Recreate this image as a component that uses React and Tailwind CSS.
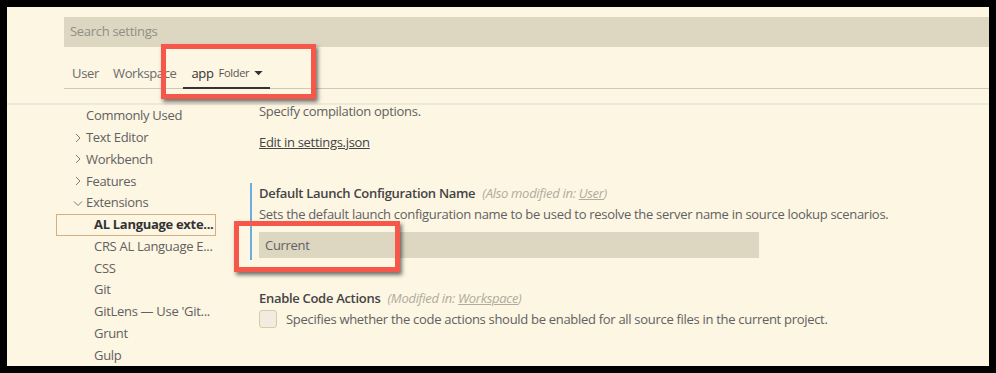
import React from "react";

const font = { fontFamily: '"Segoe UI", "Open Sans", "Noto Sans", sans-serif' };

function Chevron({ down }) {
  return (
    <svg width="16" height="16" viewBox="0 0 16 16" className="shrink-0">
      {down ? (
        <polyline points="4,6.5 8,10.5 12,6.5" fill="none" stroke="#7a7a7a" strokeWidth="1" />
      ) : (
        <polyline points="6,4 10,8 6,12" fill="none" stroke="#7a7a7a" strokeWidth="1" />
      )}
    </svg>
  );
}

function TreeItem({ label, chevron, level = 0, selected }) {
  return (
    <div
      className={
        "h-[22px] flex items-center text-[13px] leading-none whitespace-nowrap " +
        (selected ? "border border-[#d3af86] font-bold text-[#333]" : "border border-transparent text-[#616161]")
      }
      style={{ paddingLeft: level === 0 ? 13 : 37 }}
    >
      {level === 0 && (
        <span className="w-[16px] flex items-center">{chevron ? <Chevron down={chevron === "down"} /> : null}</span>
      )}
      <span>{label}</span>
    </div>
  );
}

export default function App() {
  return (
    <div className="w-[996px] h-[373px] bg-black p-[7px] tracking-[-0.3px]" style={font}>
      <div className="relative h-full bg-[#fdf6e3] overflow-hidden flex flex-col">
        {/* search */}
        <div className="ml-[57px] mt-[10px] h-[30px] bg-[#ddd6c1] flex items-center pl-[6px] text-[13px] text-[#8f8f85]">
          Search settings
        </div>
        {/* tabs */}
        <div className="ml-[57px] h-[42px] flex items-end border-b border-[#cfcab8]">
          <div className="pl-2 pr-[7px] h-full flex items-center pt-[12px] text-[13px] text-[#6a6a6a]">User</div>
          <div className="px-[7px] h-full flex items-center pt-[12px] text-[13px] text-[#6a6a6a] tracking-[-0.4px]">Workspace</div>
          <div className="pl-2 pr-[7px] h-full flex items-center pt-[12px] border-b-2 border-[#333] mb-[-1px] text-[#333]">
            <span className="text-[13px]">app</span>
            <span className="text-[11px] ml-[5px] text-[#555]">Folder</span>
            <svg width="9" height="5" viewBox="0 0 10 6" className="ml-[5px]">
              <polygon points="0,0 10,0 5,5" fill="#333" />
            </svg>
          </div>
        </div>
        {/* body */}
        <div className="mt-[14px] flex-1 flex border-t-2 border-[#efe9d8] min-h-0">
          <div className="ml-[49px] w-[160px] flex flex-col">
            <TreeItem label="Commonly Used" />
            <TreeItem label="Text Editor" chevron="right" />
            <TreeItem label="Workbench" chevron="right" />
            <TreeItem label="Features" chevron="right" />
            <TreeItem label="Extensions" chevron="down" />
            <TreeItem label="AL Language exte..." level={1} selected />
            <TreeItem label="CRS AL Language E..." level={1} />
            <TreeItem label="CSS" level={1} />
            <TreeItem label="Git" level={1} />
            <TreeItem label="GitLens — Use 'Git..." level={1} />
            <TreeItem label="Grunt" level={1} />
            <TreeItem label="Gulp" level={1} />
          </div>
          <div className="ml-[34px] flex-1 flex flex-col text-[13px] text-[#616161]">
            <div className="pl-[9px] mt-[-3px] leading-[18px]">Specify compilation options.</div>
            <div className="pl-[9px] mt-[13px] leading-[18px] text-[#444] underline">Edit in settings.json</div>
            <div className="mt-[32px] border-l-2 border-[#6aaee0] pl-[7px] pt-[1px] pb-[2px] w-[509px]">
              <div className="leading-[18px] flex items-baseline">
                <span className="font-semibold text-[#444]">Default Launch Configuration Name</span>
                <span className="italic text-[#b0ab9c] ml-[7px]">
                  (Also modified in: <span className="underline">User</span>)
                </span>
              </div>
              <div className="leading-[18px] mt-[3px] whitespace-nowrap">
                Sets the default launch configuration name to be used to resolve the server name in source lookup scenarios.
              </div>
              <div className="mt-[9px] h-[26px] w-[500px] bg-[#ddd6c1] flex items-center pl-[6px] pt-[2px] text-[#616161]">
                Current
              </div>
            </div>
            <div className="pl-[9px] mt-[29px] leading-[18px] flex items-baseline">
              <span className="font-semibold text-[#444]">Enable Code Actions</span>
              <span className="italic text-[#b0ab9c] ml-[7px]">
                (Modified in: <span className="underline">Workspace</span>)
              </span>
            </div>
            <div className="pl-[9px] mt-[3px] flex items-center">
              <div className="w-[18px] h-[18px] rounded-[3px] bg-[#f1ecdf] border border-[#dcc7a6]"></div>
              <span className="ml-[9px] leading-[18px]">
                Specifies whether the code actions should be enabled for all source files in the current project.
              </span>
            </div>
          </div>
        </div>

        {/* annotation boxes */}
        <div className="absolute left-[154px] top-[37px] w-[155px] h-[55px] border-[5px] border-[#f5574a] shadow-[2px_3px_4px_rgba(0,0,0,0.55)]"></div>
        <div className="absolute left-[227px] top-[214px] w-[166px] h-[51px] border-[5px] border-[#f5574a] shadow-[2px_3px_4px_rgba(0,0,0,0.55)]"></div>
      </div>
    </div>
  );
}
